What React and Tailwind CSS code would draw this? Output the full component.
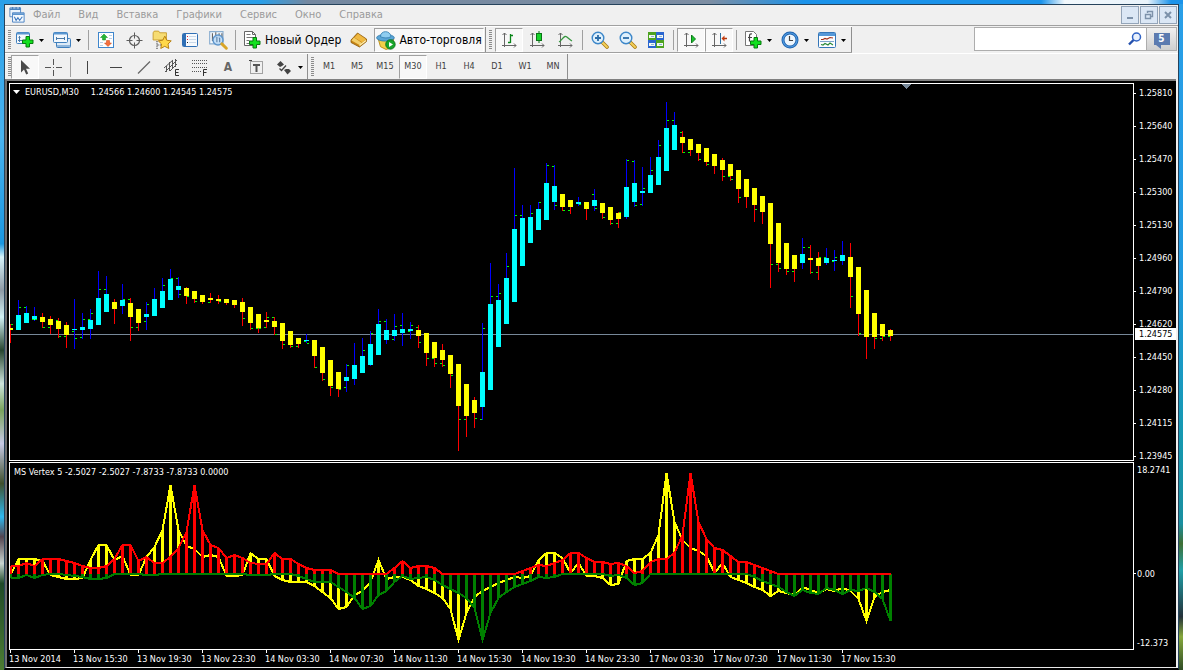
import React, { useState } from "react";

const STEP = 8;
const FIRST_X = 10;
const ZERO_Y = 574;

// [wick top, body top, body bottom, wick bottom, rising?]
const CANDLES = [
  [324, 328, 330, 343, 0], [300, 315, 330, 330, 1], [306, 313, 323, 323, 1], [307, 316, 320, 321, 1],
  [313, 317, 322, 328, 0], [316, 319, 325, 334, 0], [318, 321, 329, 338, 0], [322, 325, 335, 348, 0],
  [299, 329, 330, 349, 1], [313, 327, 330, 339, 1], [309, 320, 329, 339, 1], [271, 298, 325, 325, 1],
  [276, 294, 312, 312, 1], [299, 302, 309, 324, 0], [284, 300, 306, 314, 1], [298, 303, 317, 341, 0],
  [309, 309, 323, 331, 0], [302, 314, 317, 330, 1], [288, 299, 316, 316, 1], [278, 291, 308, 308, 1],
  [269, 279, 300, 300, 1], [277, 286, 290, 298, 1], [287, 288, 296, 304, 0], [291, 291, 299, 303, 0],
  [295, 295, 302, 304, 0], [293, 298, 300, 303, 0], [295, 299, 301, 304, 0], [299, 299, 303, 305, 0],
  [300, 300, 305, 308, 0], [298, 302, 312, 326, 0], [307, 307, 323, 330, 0], [314, 314, 328, 333, 0],
  [312, 320, 322, 328, 0], [317, 321, 327, 335, 0], [323, 323, 341, 349, 0], [331, 331, 345, 348, 0],
  [338, 338, 344, 348, 0], [334, 340, 341, 343, 1], [340, 340, 356, 368, 0], [347, 347, 373, 381, 0],
  [360, 360, 386, 396, 0], [372, 372, 389, 397, 0], [364, 377, 381, 392, 1], [343, 365, 379, 385, 1],
  [338, 356, 373, 373, 1], [331, 344, 365, 366, 1], [309, 324, 355, 355, 1], [319, 330, 340, 344, 1],
  [314, 330, 336, 341, 1], [313, 329, 333, 346, 1], [322, 329, 331, 339, 1], [325, 330, 336, 348, 0],
  [333, 333, 353, 366, 0], [342, 342, 358, 367, 0], [344, 350, 360, 367, 0], [355, 355, 374, 388, 0],
  [364, 364, 406, 451, 0], [384, 384, 416, 437, 0], [397, 400, 413, 428, 0], [323, 372, 407, 420, 1],
  [263, 304, 390, 390, 1], [284, 300, 347, 347, 1], [253, 278, 324, 324, 1], [168, 229, 302, 302, 1],
  [205, 218, 266, 266, 1], [205, 217, 243, 243, 1], [202, 209, 230, 230, 1], [163, 183, 220, 220, 1],
  [165, 186, 202, 210, 1], [194, 194, 207, 211, 0], [200, 200, 207, 214, 0], [197, 202, 204, 206, 1],
  [202, 202, 209, 220, 0], [189, 200, 206, 211, 1], [203, 203, 213, 219, 0], [207, 207, 220, 225, 0],
  [212, 213, 219, 228, 0], [159, 187, 217, 219, 1], [160, 183, 202, 207, 1], [167, 191, 193, 206, 1],
  [157, 175, 193, 193, 1], [140, 157, 185, 185, 1], [102, 128, 171, 171, 1], [112, 125, 150, 150, 1],
  [131, 137, 143, 153, 0], [139, 139, 150, 156, 0], [144, 144, 153, 161, 0], [148, 148, 162, 166, 0],
  [154, 154, 166, 174, 0], [158, 160, 170, 181, 0], [164, 164, 176, 181, 0], [170, 170, 189, 203, 0],
  [179, 179, 197, 208, 0], [188, 188, 205, 222, 0], [196, 196, 212, 224, 0], [203, 203, 244, 288, 0],
  [223, 223, 263, 272, 0], [243, 243, 269, 275, 0], [255, 255, 269, 282, 0], [238, 254, 263, 269, 1],
  [245, 258, 260, 274, 0], [252, 258, 266, 280, 0], [248, 258, 263, 265, 1], [250, 260, 261, 271, 1],
  [241, 255, 261, 265, 1], [243, 257, 277, 308, 0], [267, 267, 314, 336, 0], [290, 290, 337, 359, 0],
  [313, 313, 337, 349, 0], [324, 324, 336, 341, 0], [329, 330, 336, 341, 0],
];

// Open ticks sit left of the wick, close ticks right of it: [bar, y]
const OPENS = [
  [2, 307], [3, 319], [5, 327], [6, 320], [7, 336], [8, 331], [9, 337], [10, 319], [12, 289], [15, 299],
  [16, 327], [17, 321], [21, 278], [25, 302], [31, 328], [32, 327], [33, 317], [36, 346], [37, 341],
  [42, 387], [47, 321], [48, 339], [49, 325], [50, 331], [51, 327], [53, 358], [54, 363], [57, 419],
  [59, 419], [61, 296], [64, 215], [68, 166], [70, 210], [73, 194], [76, 223], [78, 161], [79, 204],
  [83, 120], [84, 132], [85, 152], [90, 176], [96, 264], [98, 271], [100, 247], [101, 272], [102, 257],
  [103, 261], [109, 338], [110, 336],
];
const CLOSES = [
  [0, 324], [1, 307], [3, 319], [4, 327], [6, 336], [8, 338], [9, 319], [10, 313], [11, 289], [14, 299],
  [15, 327], [17, 304], [19, 285], [20, 278], [21, 294], [22, 296], [23, 301], [26, 301], [29, 318],
  [30, 328], [31, 328], [32, 317], [33, 334], [34, 344], [35, 346], [37, 343], [38, 367], [39, 379],
  [40, 387], [41, 389], [42, 365], [44, 350], [45, 333], [46, 321], [48, 326], [50, 325], [51, 342],
  [52, 358], [53, 363], [54, 365], [55, 375], [56, 419], [58, 418], [59, 328], [60, 296], [61, 293],
  [62, 266], [63, 215], [65, 213], [66, 202], [67, 165], [68, 205], [69, 210], [71, 204], [73, 208],
  [74, 217], [75, 223], [76, 212], [77, 160], [78, 205], [79, 188], [80, 170], [81, 145], [82, 120],
  [84, 152], [86, 159], [87, 164], [89, 176], [90, 179], [91, 197], [93, 209], [95, 264], [96, 268],
  [97, 271], [99, 247], [100, 272], [101, 257], [103, 257], [105, 296], [106, 333], [108, 338], [109, 336],
];

const YELLOW = [
  575, 559, 559, 559, 561, 575, 577, 579, 579, 578, 560, 545, 545, 560, 556, 575, 575, 557, 547, 530,
  485, 530, 546, 549, 557, 555, 557, 576, 576, 575, 553, 559, 559, 576, 580, 582, 582, 582, 586, 592,
  598, 609, 607, 595, 591, 582, 560, 579, 577, 577, 580, 586, 589, 593, 598, 609, 640, 613, 597, 591,
  587, 583, 580, 577, 578, 576, 560, 553, 553, 558, 573, 563, 576, 576, 578, 585, 584, 561, 559, 559,
  553, 535, 473, 522, 540, 548, 551, 556, 573, 563, 577, 580, 583, 587, 590, 596, 591, 593, 595, 587,
  590, 593, 589, 591, 588, 591, 599, 621, 597, 592, 590,
];
const RED = [
  566, 566, 563, 566, 559, 559, 559, 561, 563, 566, 568, 568, 566, 559, 545, 545, 561, 557, 563, 563,
  557, 548, 532, 485, 530, 545, 548, 558, 555, 558, 563, 564, 564, 553, 559, 559, 564, 568, 570, 570,
  570, 574, 574, 574, 574, 574, 574, 574, 568, 561, 568, 566, 566, 568, 574, 574, 574, 574, 574, 574,
  574, 574, 574, 574, 571, 568, 565, 566, 563, 560, 553, 553, 558, 562, 562, 564, 563, 566, 573, 571,
  562, 559, 559, 553, 535, 473, 522, 539, 548, 550, 556, 562, 562, 565, 568, 571, 574, 574, 574, 574,
  574, 574, 574, 574, 574, 574, 574, 574, 574, 574, 574,
];
const GREEN = [
  578, 578, 575, 578, 575, 574, 574, 575, 576, 577, 579, 579, 578, 574, 574, 574, 574, 575, 575, 574,
  574, 574, 574, 574, 574, 574, 574, 574, 574, 574, 575, 575, 575, 574, 574, 574, 576, 579, 582, 582,
  582, 587, 592, 598, 609, 606, 595, 591, 582, 576, 579, 578, 577, 580, 585, 589, 593, 598, 608, 640,
  613, 598, 592, 587, 584, 581, 577, 578, 577, 574, 574, 574, 574, 574, 574, 576, 575, 578, 585, 583,
  574, 574, 574, 574, 574, 574, 574, 574, 574, 574, 574, 574, 574, 577, 581, 584, 587, 592, 596, 590,
  593, 594, 588, 590, 594, 590, 591, 588, 592, 599, 621,
];

const PRICES = [
  "1.25810", "1.25640", "1.25470", "1.25300", "1.25130", "1.24960",
  "1.24790", "1.24620", "1.24450", "1.24280", "1.24115", "1.23945",
];

const TIMES = [
  "13 Nov 2014", "13 Nov 15:30", "13 Nov 19:30", "13 Nov 23:30", "14 Nov 03:30", "14 Nov 07:30", "14 Nov 11:30",
  "14 Nov 15:30", "14 Nov 19:30", "14 Nov 23:30", "17 Nov 03:30", "17 Nov 07:30", "17 Nov 11:30", "17 Nov 15:30",
];

const MENU = ["Файл", "Вид", "Вставка", "Графики", "Сервис", "Окно", "Справка"];
const PERIODS = ["M1", "M5", "M15", "M30", "H1", "H4", "D1", "W1", "MN"];

const barX = (i) => FIRST_X + i * STEP;

/* ---------- icons ---------- */

const Svg = ({ size = 18, children }) => (
  <svg width={size} height={size} viewBox="0 0 18 18" fill="none" className="shrink-0">
    {children}
  </svg>
);

const Plus = ({ x, y }) => (
  <path
    transform={`translate(${x} ${y})`}
    d="M4 .5h3.500V4H11v3.500H7.500V11H4V7.500H.5V4H4z"
    fill="#12e01e"
    stroke="#067a0e"
  />
);

const AppIcon = () => (
  <Svg size={16}>
    <path d="M1 1h12v10H1z" fill="#eaf3fc" stroke="#4b82bd" />
    <path d="M1 2.500h12M4 0v3M8 0v3M12 0v3" stroke="#4b82bd" strokeWidth="1.500" />
    <path d="M4 6.500h13V17H4z" fill="#f4f9fe" stroke="#3f7ac0" />
    <path d="M4 8h13" stroke="#5b93cc" strokeWidth="2" />
    <path d="M6 11l2 4 2-3 2 3 3-4" stroke="#3f7ac0" strokeWidth="1.200" />
  </Svg>
);

const NewChartIcon = () => (
  <Svg>
    <rect x=".5" y="1.500" width="13" height="11" rx="1" fill="#f3f8fd" stroke="#3f7fbd" />
    <path d="M1 2.500h12" stroke="#5a97d0" strokeWidth="2" />
    <path d="M3.500 5v6M2 9.500h8M2.500 6.500h2" stroke="#4c7ba8" />
    <Plus x={6} y={5} />
  </Svg>
);

const ProfilesIcon = () => (
  <Svg>
    <rect x="3.500" y="7.500" width="14" height="9" rx="1" fill="#dceaf7" stroke="#3f7fbd" />
    <path d="M4 15h13" stroke="#8fb6dc" strokeWidth="2" />
    <rect x=".5" y="1.500" width="14" height="10" rx="1" fill="#f3f8fd" stroke="#3f7fbd" />
    <path d="M1 2.500h13" stroke="#5a97d0" strokeWidth="2" />
    <path d="M3 7.500h9M3.500 6v3M11.500 6v3" stroke="#4c7ba8" />
  </Svg>
);

const MarketIcon = () => (
  <Svg>
    <rect x="1.500" y="1.500" width="15" height="15" fill="#fff" stroke="#3f86cc" />
    <path d="M4 3.500h1M12 4.500h3M12 7.500h3M3 11.500h3M3 14.500h3" stroke="#b9cfe6" />
    <path d="M7 3l3.500 3.500H8.500V9h-3V6.500h-2z" fill="#25b536" stroke="#0b8a1b" strokeWidth=".5" />
    <path d="M11 15.500L7.500 12h2V9.500h3V12h2z" fill="#f5703f" stroke="#c9400f" strokeWidth=".5" />
  </Svg>
);

const TargetIcon = () => (
  <Svg>
    <circle cx="9.500" cy="9.500" r="5" stroke="#5c5c5c" strokeWidth="1.200" />
    <path d="M9.500 1.500v6M9.500 11.500v6M1.500 9.500h6M11.500 9.500h6" stroke="#5c5c5c" />
  </Svg>
);

const NavigatorIcon = () => (
  <Svg size={20}>
    <path d="M1 8V2.500L2 1h4l1 1.500h6V9H1z" fill="#f6dc73" stroke="#c69a2a" strokeWidth=".8" />
    <path d="M4.500 10v7M5 13.500h3" stroke="#444" strokeDasharray="1 1" />
    <path
      d="M11.500 5.500l1.800 3.700 4 .6-2.900 2.800.7 4-3.600-1.900-3.600 1.900.7-4-2.900-2.800 4-.6z"
      fill="#ffd84a"
      stroke="#b98212"
      strokeWidth=".9"
    />
  </Svg>
);

const TerminalIcon = () => (
  <Svg>
    <rect x="1.500" y="2.500" width="15" height="13" rx="1" fill="#f7fafd" stroke="#2f6fb5" />
    <path d="M3.500 3v12" stroke="#2f6fb5" strokeWidth="3" />
    <path d="M8 5.500h7M8 8.500h7M8 11.500h7" stroke="#c9d8e8" />
    <path d="M6 5.500h1M6 8.500h1" stroke="#d23" />
    <path d="M6 11.500h1" stroke="#222" />
  </Svg>
);

const TesterIcon = () => (
  <Svg size={20}>
    <path d="M1.500 1.500h12v11h-12z" fill="#f3f8fd" stroke="#8aaed0" />
    <path d="M4 3v7M7 2v5M10 3v5M12.500 3v4" stroke="#666" />
    <circle cx="9" cy="9" r="4.500" fill="#bcdcf8" fillOpacity=".85" stroke="#5f96cc" strokeWidth="1.300" />
    <path d="M8 6v5M10.500 7v4" stroke="#5a7fa5" />
    <path d="M12.500 12.500l4 4" stroke="#d9a527" strokeWidth="2.600" strokeLinecap="round" />
  </Svg>
);

const OrderIcon = () => (
  <Svg>
    <path d="M1.500.5h8l3 3v11h-11z" fill="#fff" stroke="#666" />
    <path d="M9.500.5v3h3" stroke="#666" />
    <path d="M3.500 3.500h4M3.500 6.500h7M3.500 9.500h3M3.500 12.500h3" stroke="#777" />
    <Plus x={6} y={6} />
  </Svg>
);

const GoldIcon = () => (
  <Svg>
    <path d="M1 9L7.500 2l9 6v2.500L9.500 16 1 11.500z" fill="#c98514" stroke="#8c5a08" strokeWidth=".8" />
    <path d="M1.500 9.500L4 6.500l8 5.500-2.500 2z" fill="#f3cf6a" />
    <path d="M4.500 6.500L8 2.800l8 5.400-3.500 3.300z" fill="#efb840" />
    <path d="M9.500 14.500L16 9.500" stroke="#fff1b5" strokeWidth="1.200" />
  </Svg>
);

const ExpertIcon = () => (
  <Svg size={20}>
    <path d="M2 8l2 7 5 2.500 5-1.500 2-8z" fill="#f4cf4a" stroke="#b98a14" strokeWidth=".8" />
    <ellipse cx="8.500" cy="7" rx="8" ry="3" fill="#5aa5d6" stroke="#2b78ab" strokeWidth=".7" />
    <path d="M4 6c0-6 9-6 9.500 0-2 1.500-7 1.500-9.500 0z" fill="#8fcdf0" stroke="#2b78ab" strokeWidth=".7" />
    <circle cx="13" cy="13" r="4.300" fill="#18a52b" stroke="#0a6d18" strokeWidth=".7" />
    <path d="M11.700 10.700v4.600l3.600-2.300z" fill="#fff" />
  </Svg>
);

const Axes = () => (
  <path d="M4.500 16V2M2.500 4l2-2 2 2M2 14.500h14M14 12.500l2 2-2 2" stroke="#666" />
);

const BarsIcon = () => (
  <Svg>
    <Axes />
    <path d="M10.500 3v9M8 11.500h2.500M10.500 4.500H13" stroke="#098518" strokeWidth="1.300" />
  </Svg>
);

const CandlesIcon = () => (
  <Svg>
    <Axes />
    <path d="M11 0v12" stroke="#087415" />
    <rect x="8.500" y="2.500" width="5" height="7" fill="#16d42a" stroke="#087415" />
  </Svg>
);

const LineIcon = () => (
  <Svg>
    <Axes />
    <path d="M3 11c2-1 4-5 6-5.500s4 3 7 4.500" stroke="#35963e" strokeWidth="1.300" />
  </Svg>
);

const ZoomIcon = ({ plus }) => (
  <Svg>
    <path d="M11 11l5 5" stroke="#a97c12" strokeWidth="3.600" strokeLinecap="round" />
    <path d="M11.500 11.500l4.500 4.500" stroke="#f2cf5c" strokeWidth="2" strokeLinecap="round" />
    <circle cx="7" cy="7" r="5.800" fill="#dff0fc" stroke="#3d87c9" strokeWidth="1.400" />
    <path d={plus ? "M4 7h6M7 4v6" : "M4 7h6"} stroke="#2d6da8" strokeWidth="1.800" />
  </Svg>
);

const TileIcon = () => (
  <Svg>
    <rect x="1" y="1" width="8" height="8" fill="#4da321" />
    <rect x="9" y="1" width="8" height="8" fill="#2a66d0" />
    <rect x="1" y="9" width="8" height="8" fill="#2a66d0" />
    <rect x="9" y="9" width="8" height="8" fill="#4da321" />
    <path d="M2 5.500h6M10 5.500h6M2 13.500h6M10 13.500h6" stroke="#f3f8f3" strokeWidth="3" />
    <path d="M4 5.500h3M12 5.500h3M4 13.500h3M12 13.500h3" stroke="#8fb4d8" />
  </Svg>
);

const ScrollIcon = () => (
  <Svg>
    <Axes />
    <path d="M9.500 4v8l4-4z" fill="#18c42c" stroke="#0a7a18" />
  </Svg>
);

const ShiftIcon = () => (
  <Svg>
    <Axes />
    <path d="M10.500 2v11" stroke="#2b6f9e" />
    <path d="M17 7.500h-3" stroke="#b3360d" strokeWidth="1.500" />
    <path d="M14.500 4.500v6l-3-3z" fill="#c33c0f" />
  </Svg>
);

const IndicatorsIcon = () => (
  <Svg>
    <path d="M1.500.5h8l3 3v11h-11z" fill="#fff" stroke="#777" />
    <path d="M8 3c-2-.5-2.500.5-2.500 2v5.500M4 6.500h4" stroke="#444" strokeWidth="1.200" />
    <Plus x={6} y={6} />
  </Svg>
);

const ClockIcon = () => (
  <Svg>
    <circle cx="9" cy="9" r="7" fill="#eef6fd" stroke="#1f62ae" strokeWidth="3" />
    <circle cx="9" cy="9" r="7" stroke="#4f9be0" strokeWidth="1.200" />
    <path d="M8.500 5v4.500H12" stroke="#444" strokeWidth="1.200" />
  </Svg>
);

const TemplatesIcon = () => (
  <Svg>
    <rect x=".5" y="1.500" width="17" height="15" rx="1" fill="#fbfdff" stroke="#3576b8" />
    <path d="M1 3.500h16" stroke="#5598d8" strokeWidth="3" />
    <path d="M3 8.500h2l2-1 2 .5 3-1.500 3 .5" stroke="#a3321c" strokeWidth="1.200" />
    <path d="M3 13.500l2 .5 2-1.500 3 1.500 2-2 3 2" stroke="#2c8a3a" strokeWidth="1.200" />
    <path d="M2 10.500h14" stroke="#7fa6cc" />
  </Svg>
);

const CursorIcon = () => (
  <Svg>
    <path d="M5 2v12.500l3-3 2.200 5 2-1-2.200-4.700h4z" fill="#4a4a4a" />
  </Svg>
);

const CrossIcon = () => (
  <Svg>
    <path d="M9.500 1v6M9.500 12v6M1 9.500h6M12 9.500h6M9 9.500h1" stroke="#555" />
  </Svg>
);

const VLineIcon = () => (
  <Svg>
    <path d="M8.500 3v13" stroke="#444" />
  </Svg>
);

const HLineIcon = () => (
  <Svg>
    <path d="M3 9.500h12" stroke="#444" />
  </Svg>
);

const TrendIcon = () => (
  <Svg>
    <path d="M3 15.500L15 3.500" stroke="#666" strokeWidth="1.200" />
  </Svg>
);

const ChannelIcon = () => (
  <Svg>
    <path d="M1 10L10 2M2 14L14 2M7 13l7-7M3.500 8v6M6.500 4v9M9.500 3v7M12.500 1v8" stroke="#555" />
    <path d="M16 11.500h-3.500v6H16M12.500 14.500h3" stroke="#333" />
  </Svg>
);

const FiboIcon = () => (
  <Svg>
    <path d="M1 2.500h15M1 5.500h15M1 9.500h15M1 13.500h9" stroke="#555" strokeDasharray="1 1" />
    <path d="M12.500 18v-6.500H16M12.500 14.500h3" stroke="#333" />
  </Svg>
);

const LabelIcon = () => (
  <Svg>
    <rect x="3.500" y="3.500" width="12" height="12" stroke="#555" strokeDasharray="1 1" />
    <path d="M2 2.500h3" stroke="#444" />
    <path d="M6 7h7M9.500 7v7" stroke="#555" strokeWidth="2" />
  </Svg>
);

const ArrowsIcon = () => (
  <Svg>
    <path d="M2 6.500L5.500 3 9 6.500 7 8l-2 1z" fill="#444" />
    <path d="M4.500 10.500l2 2 4.500-5" stroke="#444" strokeWidth="1.300" />
    <path d="M9 12l2-1h3l2 2-3.500 3.500z" fill="#444" />
  </Svg>
);

const Caret = () => (
  <svg width="5" height="3" viewBox="0 0 5 3" className="shrink-0">
    <path d="M0 0h5L2.500 3z" fill="#000" />
  </svg>
);

/* ---------- toolbar parts ---------- */

const ToolButton = ({ label, pressed, caret, onClick, children }) => (
  <button
    type="button"
    aria-label={label}
    aria-pressed={pressed}
    onClick={onClick}
    className={`flex h-6 shrink-0 items-center justify-center border pt-px ${caret ? "w-[37px] gap-[5px]" : "w-7"} ${
      pressed ? "border-t-[#a0a0a0] border-l-[#a0a0a0] border-r-white border-b-white bg-[#f8f8f8]" : "border-transparent"
    }`}
  >
    {children}
    {caret && <Caret />}
  </button>
);

const Grip = () => (
  <div className="flex h-[19px] w-[3px] shrink-0 flex-col justify-between">
    {Array.from({ length: 10 }, (_, i) => (
      <span key={i} className="h-px bg-[#8c8c8c]" />
    ))}
  </div>
);

const Sep = () => <div className="mx-[3px] h-5 w-px shrink-0 bg-[#a0a0a0]" />;

const BarEnd = () => <div className="h-full w-px shrink-0 bg-[#8f8f8f]" />;

const WindowButton = ({ label, children }) => (
  <button
    type="button"
    aria-label={label}
    className="flex h-[18px] w-[18px] items-center justify-center border border-[#93a4b8] bg-[#dbe7f5]"
  >
    <svg width="12" height="12" fill="none" stroke="#7d92aa" strokeWidth="2">
      {children}
    </svg>
  </button>
);

const MenuBar = () => (
  <header className="flex h-[21px] items-center border-b border-[#a0a0a0] pl-1">
    <AppIcon />
    <nav className="-ml-px flex text-[11px] text-[#9b9b9b]">
      {MENU.map((item) => (
        <a key={item} href="#" className="px-[9px]">
          {item}
        </a>
      ))}
    </nav>
    <div className="mr-px ml-auto flex gap-px">
      <WindowButton label="Свернуть">
        <path d="M3 9h6" />
      </WindowButton>
      <WindowButton label="Восстановить">
        <path d="M4.500 4V2.500h5v5H8M4 2.500h6M2.500 5.500h5v4h-5zM2 5.500h6" strokeWidth="1.400" />
      </WindowButton>
      <WindowButton label="Закрыть">
        <path d="M3 3l6 6M9 3l-6 6" />
      </WindowButton>
    </div>
  </header>
);

const MainToolbar = () => {
  const [mode, setMode] = useState("bars");

  return (
    <div className="flex h-[27px] items-start">
      <div className="flex h-[27px] items-center border-t border-b border-t-white border-b-[#a0a0a0] pl-[3px]">
        <Grip />
        <ToolButton label="Новый график" caret><NewChartIcon /></ToolButton>
        <ToolButton label="Профили" caret><ProfilesIcon /></ToolButton>
        <Sep />
        <ToolButton label="Обзор рынка"><MarketIcon /></ToolButton>
        <ToolButton label="Окно данных"><TargetIcon /></ToolButton>
        <ToolButton label="Навигатор"><NavigatorIcon /></ToolButton>
        <ToolButton label="Терминал"><TerminalIcon /></ToolButton>
        <ToolButton label="Тестер стратегий"><TesterIcon /></ToolButton>
        <Sep />
        <button type="button" className="flex h-6 items-center gap-1 px-1 pt-px text-[12px] whitespace-nowrap text-black">
          <OrderIcon />
          Новый Ордер
        </button>
        <ToolButton label="MetaEditor"><GoldIcon /></ToolButton>
        <button
          type="button"
          className="mx-px flex h-6 items-center gap-[3px] border border-t-[#a0a0a0] border-r-white border-b-white border-l-[#a0a0a0] bg-[#f8f8f8] px-px pt-px text-[12px] whitespace-nowrap text-black"
        >
          <ExpertIcon />
          Авто-торговля
        </button>
        <BarEnd />
        <div className="px-[3px]"><Grip /></div>
        <ToolButton label="Бары" pressed={mode === "bars"} onClick={() => setMode("bars")}><BarsIcon /></ToolButton>
        <ToolButton label="Японские свечи" pressed={mode === "candles"} onClick={() => setMode("candles")}><CandlesIcon /></ToolButton>
        <ToolButton label="Линия" pressed={mode === "line"} onClick={() => setMode("line")}><LineIcon /></ToolButton>
        <Sep />
        <ToolButton label="Увеличить"><ZoomIcon plus /></ToolButton>
        <ToolButton label="Уменьшить"><ZoomIcon /></ToolButton>
        <ToolButton label="Расположить окна"><TileIcon /></ToolButton>
        <Sep />
        <ToolButton label="Автопрокрутка" pressed><ScrollIcon /></ToolButton>
        <ToolButton label="Сдвиг графика" pressed><ShiftIcon /></ToolButton>
        <Sep />
        <ToolButton label="Индикаторы" caret><IndicatorsIcon /></ToolButton>
        <ToolButton label="Периоды" caret><ClockIcon /></ToolButton>
        <ToolButton label="Шаблоны" caret><TemplatesIcon /></ToolButton>
        <BarEnd />
      </div>
      <div className="mt-px mr-px ml-auto flex h-6 w-[203px] shrink-0 border border-[#adadad] bg-white">
        <input type="text" aria-label="Поиск" className="min-w-0 flex-1 bg-white px-1 text-[11px] outline-none" />
        <svg width="14" height="14" viewBox="0 0 14 14" fill="none" className="mx-1 self-center">
          <circle cx="8.500" cy="5" r="4" fill="#e9f1fc" stroke="#2f62c4" strokeWidth="1.500" />
          <path d="M5.500 8L1 12.500" stroke="#2450ad" strokeWidth="2.400" />
        </svg>
        <button
          type="button"
          className="flex w-[30px] items-center justify-center border-l border-[#adadad] bg-linear-to-b from-[#f0f0f0] to-[#cfcfcf]"
        >
          <span className="relative flex h-3 w-4 items-center justify-center bg-[#5c7bb0] text-[10px] leading-[12px] font-bold text-white">
            5
            <svg width="5" height="4" className="absolute top-3 left-[2px]"><path d="M0 0h5v4z" fill="#5c7bb0" /></svg>
          </span>
        </button>
      </div>
    </div>
  );
};

const DrawToolbar = () => {
  const [period, setPeriod] = useState("M30");

  return (
    <div className="flex h-[26px] items-center border-t border-white pl-[3px]">
      <Grip />
      <ToolButton label="Курсор" pressed><CursorIcon /></ToolButton>
      <ToolButton label="Перекрестие"><CrossIcon /></ToolButton>
      <Sep />
      <ToolButton label="Вертикальная линия"><VLineIcon /></ToolButton>
      <ToolButton label="Горизонтальная линия"><HLineIcon /></ToolButton>
      <ToolButton label="Трендовая линия"><TrendIcon /></ToolButton>
      <ToolButton label="Канал"><ChannelIcon /></ToolButton>
      <ToolButton label="Фибоначчи"><FiboIcon /></ToolButton>
      <ToolButton label="Текст">
        <span className="text-[12px] font-bold text-[#666]">A</span>
      </ToolButton>
      <ToolButton label="Метка"><LabelIcon /></ToolButton>
      <ToolButton label="Стрелки" caret><ArrowsIcon /></ToolButton>
      <BarEnd />
      <div className="pr-px pl-[3px]"><Grip /></div>
      {PERIODS.map((p) => (
        <button
          key={p}
          type="button"
          onClick={() => setPeriod(p)}
          className={`h-6 w-7 border pt-px text-[9px] text-[#404040] ${
            p === period ? "border-t-[#a0a0a0] border-r-white border-b-white border-l-[#a0a0a0] bg-[#f8f8f8]" : "border-transparent"
          }`}
        >
          {p}
        </button>
      ))}
      <BarEnd />
    </div>
  );
};

/* ---------- charts ---------- */

const CandleChart = () => (
  <svg width="100%" height="100%" shapeRendering="crispEdges" className="absolute inset-0">
    <g transform="translate(-10 -84)">
      <rect x="10" y="334" width="100%" height="1" fill="#778899" />
      {CANDLES.map(([high, top, bottom, low, up], i) => (
        <g key={i}>
          <rect x={barX(i)} y={high} width="1" height={low - high} fill={up ? "#0000ff" : "#ff0000"} />
          <rect x={barX(i) - 2} y={top} width="5" height={bottom - top} fill={up ? "#00ffff" : "#ffff00"} />
        </g>
      ))}
      {OPENS.map(([i, y]) => (
        <rect key={i} x={barX(i) - 2} y={y} width="2" height="1" fill="#00ff00" />
      ))}
      {CLOSES.map(([i, y]) => (
        <rect key={i} x={barX(i) + 1} y={y} width="2" height="1" fill="#00ff00" />
      ))}
      <path d="M901 84h11l-5.500 5z" fill="#778899" />
    </g>
  </svg>
);

const Series = ({ values, color }) => (
  <g stroke={color} fill="none">
    {values.map((y, i) => (
      <path key={i} d={`M${barX(i) + 0.5} ${ZERO_Y}V${y}`} strokeWidth="3" />
    ))}
    <polyline points={values.map((y, i) => `${barX(i) + 0.5},${y}`).join(" ")} strokeWidth="2" />
  </g>
);

// The green line stays on top of the red bars, but under the red zero line.
const VertexChart = () => (
  <svg width="100%" height="100%" shapeRendering="crispEdges" className="absolute inset-0">
    <g transform="translate(-10 -463)">
      <Series values={YELLOW} color="#ffff00" />
      <Series values={RED} color="#ff0000" />
      <Series values={GREEN} color="#008000" />
      <polyline
        points={RED.map((y, i) => `${barX(i) + 0.5},${y}`).join(" ")}
        fill="none"
        stroke="#ff0000"
        strokeWidth="2"
      />
    </g>
  </svg>
);

const ChartWindow = () => (
  <main className="mr-[2px] border-t-2 border-b border-l-2 border-t-[#808080] border-b-[#e8e8e8] border-l-[#707070] bg-black pt-[2px] pl-[2px] text-[9px] leading-[12px] text-white">
    <section className="flex h-[378px]">
      <div className="relative min-w-0 flex-1 overflow-hidden border border-white">
        <CandleChart />
        <div className="relative flex items-center pt-[2px] pl-[3px]">
          <svg width="7" height="4"><path d="M0 0h7L3.500 4z" fill="#fff" /></svg>
          <span className="pr-3 pl-[5px]">EURUSD,M30</span>
          <span>1.24566 1.24600 1.24545 1.24575</span>
        </div>
      </div>
      <ul className="relative flex h-[379px] w-[42px] shrink-0 flex-col justify-between pt-1">
        {PRICES.map((price) => (
          <li key={price} className="flex items-center gap-[3px]">
            <span className="h-px w-[2px] bg-white" />
            {price}
          </li>
        ))}
        <li className="absolute top-[245px] right-0 left-px bg-white pl-1 text-black">1.24575</li>
      </ul>
    </section>
    <section className="mt-px flex h-[188px]">
      <div className="relative min-w-0 flex-1 overflow-hidden border border-white">
        <VertexChart />
        <div className="relative pt-[3px] pl-1">MS Vertex 5 -2.5027 -2.5027 -7.8733 -7.8733 0.0000</div>
      </div>
      <ul className="flex w-[42px] shrink-0 flex-col justify-between pt-[2px] pb-px">
        <li className="pl-[3px]">18.2741</li>
        <li className="flex items-center gap-px pt-[34px]">
          <span className="h-px w-[2px] bg-white" />
          0.00
        </li>
        <li className="pl-[3px]">-12.373</li>
      </ul>
    </section>
    <ul className="flex h-[17px] overflow-hidden">
      {TIMES.map((time) => (
        <li key={time} className="w-16 shrink-0 whitespace-nowrap">
          <span className="ml-px block h-[3px] w-px bg-white" />
          {time}
        </li>
      ))}
    </ul>
  </main>
);

export default function App() {
  return (
    <div className="bg-[linear-gradient(to_right,#2a9fe8_0%,#2a9fe8_22%,#7488a0_26%,#7d8ea3_60%,#1b93ea_68%,#1b93ea_88%,#f2f8fc_90%,#e9f3fa_97%,#1b93ea_99%)] pt-1 font-['DejaVu_Sans_Condensed',sans-serif]">
      <div className="bg-[linear-gradient(to_bottom,#2a9fe8_0%,#1f9adf_40%,#1598b0_65%,#1a8fa0_78%,#3f6f35_81%,#20a0a8_85%,#24323a_92%,#86a83c_95%,#2f4c26_100%)] pr-1">
        <div className="bg-[linear-gradient(to_bottom,#2a9fe8_0%,#4ab4f0_20%,#1b97e0_36%,#d9f4fa_38%,#8f9aa5_43%,#d3f2f5_47%,#27452f_52%,#cfe5dd_57%,#7aa35c_61%,#c9cbe6_66%,#3f4f2c_72%,#2fb9f0_77%,#54444f_80%,#c8d4d0_84%,#1f4a28_87%,#4d7d33_100%)] pl-1">
          <div className="border-t border-r border-b-2 border-l border-[#26435c] border-b-black bg-[#f0f0f0]">
            <MenuBar />
            <MainToolbar />
            <DrawToolbar />
            <ChartWindow />
          </div>
        </div>
      </div>
    </div>
  );
}
